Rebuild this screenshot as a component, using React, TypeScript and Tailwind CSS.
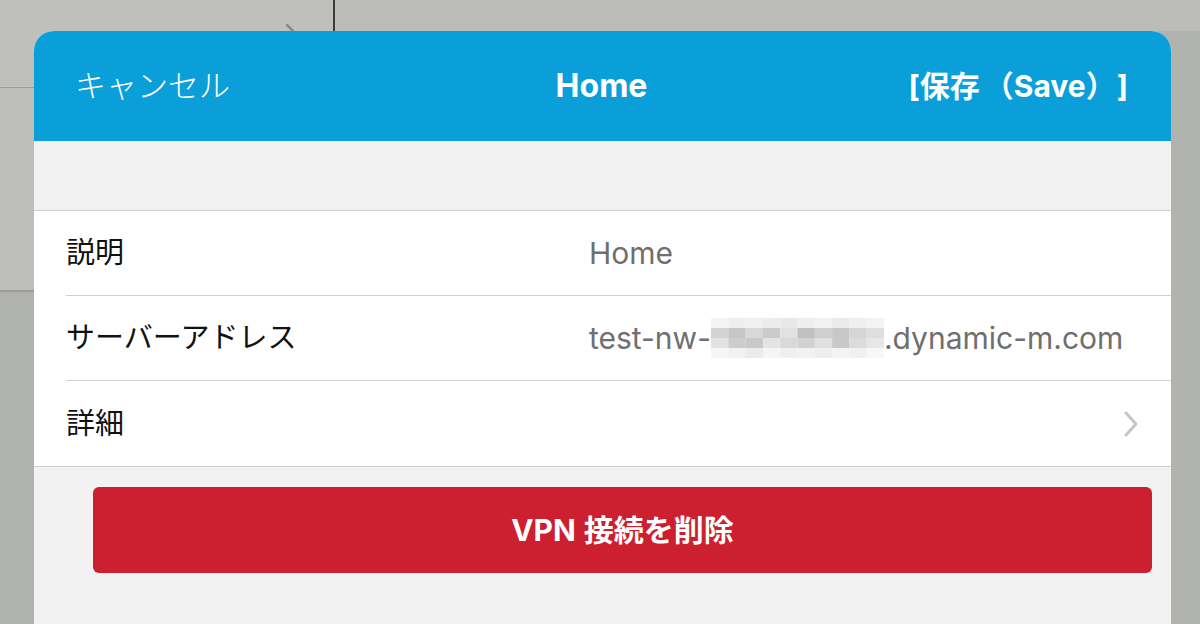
import React from "react";

const font = { fontFamily: 'Inter, "Noto Sans CJK JP", sans-serif' };

// pixelated patch that hides part of the hostname
const mosaic = [
  ["#f4f4f4", "#eeeeee", "#f0f0f0", "#ececec", "#e8e8e8", "#eeeeee", "#f2f2f2", "#eaeaea", "#efefef", "#f3f3f3"],
  ["#d3d3d3", "#c6c6c6", "#d8d8d8", "#cbcbcb", "#e1e1e1", "#c0c0c0", "#cfcfcf", "#c8c8c8", "#d5d5d5", "#dedede"],
  ["#e2e2e2", "#cdcdcd", "#c9c9c9", "#e4e4e4", "#d9d9d9", "#d2d2d2", "#e0e0e0", "#c9c9c9", "#dbdbdb", "#e7e7e7"],
  ["#f6f6f6", "#f1f1f1", "#ebebeb", "#f5f5f5", "#efefef", "#f2f2f2", "#eeeeee", "#f4f4f4", "#f0f0f0", "#f7f7f7"],
];

function Mosaic() {
  return (
    <svg width="173" height="40" viewBox="0 0 173 40" className="inline-block align-middle">
      {mosaic.map((row, r) =>
        row.map((c, i) => <rect key={r + "-" + i} x={i * 17.3} y={r * 10} width="17.4" height="10.1" fill={c} />)
      )}
    </svg>
  );
}

function Row({ label, children, last }: { label: string; children?: React.ReactNode; last?: boolean }) {
  return (
    <div className="pl-8">
      <div className={"h-[85px] flex items-center pr-[33px] " + (last ? "" : "border-b border-[#cfcfd2]")}>
        <div className="w-[523px] shrink-0 text-[29px] text-[#111]">{label}</div>
        <div className="flex-1 flex items-center text-[30px] text-[#6f6f6f] whitespace-nowrap">{children}</div>
      </div>
    </div>
  );
}

export default function App() {
  return (
    <div className="relative h-[624px] w-[1200px] overflow-hidden bg-[#b1b3af]" style={font}>
      {/* page behind the sheet */}
      <div className="flex h-full">
        <div className="w-[335px] shrink-0 flex flex-col border-r-2 border-[#3a3a3a]">
          <div className="h-[88px] border-b border-[#9c9d9a] bg-[#bfc0bc] flex justify-end items-start pr-[38px] pt-[23px]">
            <svg width="10" height="10" viewBox="0 0 10 10">
              <path d="M2 2 L8 8" stroke="#8a8b88" strokeWidth="2.5" strokeLinecap="round" />
            </svg>
          </div>
          <div className="h-[204px] border-b-2 border-[#9c9d9a] bg-[#bdbeba]" />
          <div className="flex-1 bg-[#b1b3af]" />
        </div>
        <div className="flex-1 flex flex-col">
          <div className="h-[31px] bg-[#bcbdb9]" />
          <div className="flex-1 bg-[#b1b3af]" />
        </div>
      </div>

      {/* sheet */}
      <div className="absolute left-[34px] top-[31px] w-[1137px] h-[620px] rounded-t-[20px] overflow-hidden bg-[#f2f2f2]">
        <div className="h-[110px] bg-[#0a9fd9] grid grid-cols-3 items-center pl-[41px] pr-[43px] text-white">
          <div className="text-[31px] font-light">キャンセル</div>
          <div className="text-center text-[32px] font-bold">Home</div>
          <div className="text-right text-[30px] font-bold whitespace-nowrap">
            <span>[保存</span>
            <span className="ml-[4px]">（Save）</span>
            <span className="ml-[16px]">]</span>
          </div>
        </div>
        <div className="h-[69px]" />
        <div className="bg-white border-y border-[#cfcfd2]">
          <Row label="説明">Home</Row>
          <Row label="サーバーアドレス">
            <span>test-nw-</span>
            <Mosaic />
            <span>.dynamic-m.com</span>
          </Row>
          <Row label="詳細" last>
            <div className="flex-1 flex justify-end">
              <svg width="14" height="26" viewBox="0 0 14 26">
                <path d="M2 2 L12 13 L2 24" fill="none" stroke="#c5c5c9" strokeWidth="3" strokeLinecap="round" strokeLinejoin="round" />
              </svg>
            </div>
          </Row>
        </div>
        <div className="pl-[59px] pr-[19px] pt-[20px]">
          <button className="w-full h-[86px] rounded-[6px] bg-[#cc1f2f] text-white text-[30px] font-bold flex items-center justify-center">
            <span>VPN</span>
            <span className="ml-[8px]">接続を削除</span>
          </button>
        </div>
      </div>
    </div>
  );
}
